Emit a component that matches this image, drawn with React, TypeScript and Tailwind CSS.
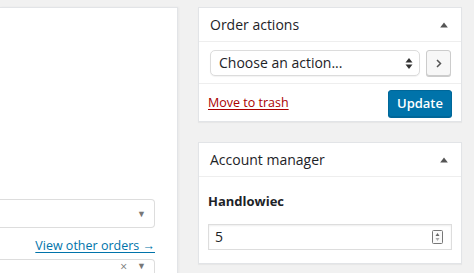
import React from "react";

function UpDownArrows() {
  return (
    <svg width="8" height="13" viewBox="0 0 8 13" className="text-[#333]">
      <path d="M4 1 L7.5 5.5 H0.5 Z" fill="currentColor" />
      <path d="M4 12 L7.5 7.5 H0.5 Z" fill="currentColor" />
    </svg>
  );
}

function CollapseArrow() {
  return (
    <svg width="8" height="6" viewBox="0 0 8 6" className="text-[#555]">
      <path d="M4 0.5 L7.8 5.5 H0.2 Z" fill="currentColor" />
    </svg>
  );
}

function NumberSpinner() {
  return (
    <svg width="11" height="14" viewBox="0 0 11 14">
      <rect x="0.5" y="0.5" width="10" height="13" rx="1" fill="#fafafa" stroke="#777" />
      <path d="M5.5 3 L7.5 6 H3.5 Z" fill="#666" />
      <path d="M5.5 11 L7.5 8 H3.5 Z" fill="#aaa" />
    </svg>
  );
}

function Postbox({ title, children }: { title: string; children: React.ReactNode }) {
  return (
    <div className="bg-white border border-[#e2e4e7] shadow-[0_1px_1px_rgba(0,0,0,0.04)]">
      <div className="h-[34px] flex items-center justify-between pl-[11px] pr-[13px] border-b border-[#eeeeee]">
        <h2 className="text-[14px] text-[#1d2327] leading-none">{title}</h2>
        <CollapseArrow />
      </div>
      {children}
    </div>
  );
}

export default function App() {
  return (
    <div
      className="w-[474px] h-[273px] overflow-hidden bg-[#f1f1f1] flex gap-[20px] pt-[7px]"
      style={{ fontFamily: '"Open Sans", "Noto Sans", sans-serif' }}
    >
      {/* left column - order data (cut off) */}
      <div className="w-[178px] shrink-0 h-[300px] bg-white border border-l-0 border-[#e2e4e7] shadow-[1px_0_2px_rgba(0,0,0,0.04)] flex flex-col pr-[22px]">
        <div className="h-[191px]" />
        <div className="h-[29px] -ml-[4px] border border-l-0 border-[#dddddd] rounded-r-[4px] flex items-center justify-end pr-[8px]">
          <span className="text-[#777] text-[9px]">▼</span>
        </div>
        <div className="flex justify-end mt-[12px]">
          <a className="text-[12.5px] leading-none text-[#0073aa] underline underline-offset-2">
            View other orders →
          </a>
        </div>
        <div className="h-[29px] mt-[6px] -ml-[4px] border border-l-0 border-[#dddddd] rounded-r-[4px] flex items-start justify-end pr-[8px] pt-[1px] gap-[10px]">
          <span className="text-[#777] text-[12px] leading-none">×</span>
          <span className="text-[#777] text-[9px] leading-none">▼</span>
        </div>
      </div>

      {/* right column - sidebar */}
      <div className="w-[264px] shrink-0 flex flex-col gap-[20px]">
        <Postbox title="Order actions">
          <div className="flex items-center gap-[6px] pl-[11px] pr-[10px] pt-[8px] pb-[7px] border-b border-[#eeeeee]">
            <div className="flex-1 h-[26px] border border-[#dcdcdc] rounded-[5px] bg-white flex items-center justify-between pl-[8px] pr-[6px] shadow-[0_1px_1px_rgba(0,0,0,0.05)]">
              <span className="text-[14px] text-[#1d2327] leading-none">Choose an action...</span>
              <UpDownArrows />
            </div>
            <button className="w-[25px] h-[26px] border border-[#cccccc] rounded-[3px] bg-[#f7f7f7] flex items-center justify-center shadow-[0_1px_0_#cccccc]">
              <svg width="6" height="9" viewBox="0 0 6 9">
                <path d="M1 1 L4.5 4.5 L1 8" fill="none" stroke="#555" strokeWidth="1.5" />
              </svg>
            </button>
          </div>
          <div className="flex items-center justify-between pl-[9px] pr-[9px] pt-[6px] pb-[4px]">
            <a className="text-[12.5px] text-[#a00] underline underline-offset-2 leading-none">Move to trash</a>
            <button className="h-[27px] w-[64px] bg-[#0073aa] border border-[#006799] rounded-[3px] text-white text-[13px] font-semibold shadow-[0_1px_0_#006799]">
              Update
            </button>
          </div>
        </Postbox>

        <Postbox title="Account manager">
          <div className="px-[9px] pt-[18px] pb-[13px]">
            <div className="text-[13px] font-bold text-[#1d2327] leading-none">Handlowiec</div>
            <div className="mt-[16px] h-[26px] border border-[#dddddd] bg-white flex items-center justify-between pl-[6px] pr-[8px] shadow-[inset_0_1px_2px_rgba(0,0,0,0.07)]">
              <span className="text-[14px] text-[#1d2327] leading-none">5</span>
              <NumberSpinner />
            </div>
          </div>
        </Postbox>
      </div>
    </div>
  );
}
